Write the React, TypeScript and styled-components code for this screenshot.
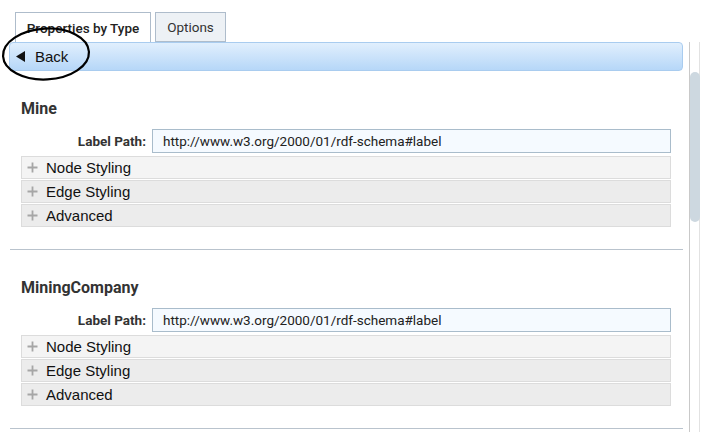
import * as React from 'react'
import styled, { createGlobalStyle } from 'styled-components'

const GlobalStyle = createGlobalStyle`
  html, body {
    margin: 0;
    padding: 0;
    background: #ffffff;
    font-family: Roboto, "Liberation Sans", Arial, sans-serif;
  }
`

// Outer page wrapper
const Page = styled.div`
  position: relative;
  width: 706px;
  height: 442px;
  padding: 12px 6px 0 8px;
  box-sizing: border-box;
  overflow: hidden;
`

const TabBar = styled.div`
  display: flex;
  gap: 4px;
  padding-left: 7px;
  height: 30px;
`

const Tab = styled.div<{ active?: boolean }>`
  display: flex;
  align-items: center;
  justify-content: center;
  box-sizing: border-box;
  height: 30px;
  width: ${props => props.active ? '136px' : '71px'};
  border: 1px solid #aebccb;
  border-bottom: ${props => props.active ? 'none' : '1px solid #aebccb'};
  background: ${props => props.active ? '#ffffff' : '#edf1f5'};
  font-size: 13.5px;
  font-weight: ${props => props.active ? 500 : 400};
  color: ${props => props.active ? '#222' : '#333'};
`

const Panel = styled.div`
  display: flex;
  height: 390px;
`

const Content = styled.div`
  width: 675px;
  overflow: hidden;
`

const BackBar = styled.div`
  display: flex;
  align-items: center;
  gap: 10px;
  height: 29px;
  margin-left: 1px;
  padding-left: 6px;
  box-sizing: border-box;
  border: 1px solid #a9ccef;
  border-radius: 4px;
  background: linear-gradient(#e1effd, #b6d7f8);
  font-family: "Liberation Sans", Arial, sans-serif;
  font-size: 15px;
  color: #111;
`

const Section = styled.div`
  margin-left: 2px;
  padding: 28px 12px 22px 11px;
  border-bottom: 1px solid #b9c3cd;
`

const Title = styled.div`
  font-size: 16px;
  font-weight: 700;
  color: #333;
  line-height: 20px;
  margin-bottom: 10px;
`

const LabelRow = styled.div`
  display: flex;
  align-items: center;
  gap: 6px;
  margin-bottom: 3px;
`

const Label = styled.div`
  width: 125px;
  text-align: right;
  font-size: 13.5px;
  font-weight: 700;
  color: #333;
`

const PathInput = styled.div`
  flex: 1;
  height: 24px;
  box-sizing: border-box;
  border: 1px solid #a9bccb;
  background: #f5faff;
  padding-left: 10px;
  display: flex;
  align-items: center;
  font-size: 13.5px;
  color: #222;
`

const AccordionList = styled.div`
  display: flex;
  flex-direction: column;
  gap: 1px;
`

const AccordionRow = styled.div<{ light?: boolean }>`
  display: flex;
  align-items: center;
  gap: 8px;
  height: 23px;
  box-sizing: border-box;
  padding-left: 5px;
  border: 1px solid #dcdcdc;
  background: ${props => props.light ? '#f4f4f4' : '#ececec'};
  font-family: "Liberation Sans", Arial, sans-serif;
  font-size: 15px;
  color: #111;
`

const Track = styled.div`
  position: relative;
  width: 11px;
  margin-left: 6px;
  box-sizing: border-box;
  border-left: 1px solid #c9c9c9;
  border-right: 1px solid #e2e2e2;
`

const Thumb = styled.div`
  position: absolute;
  left: 0;
  right: -1px;
  top: 30px;
  height: 150px;
  border-radius: 5px;
  background: #cdd8e0;
`

const Annotation = styled.svg`
  position: absolute;
  left: 1px;
  top: 26px;
  pointer-events: none;
`

const PlusIcon = () => (
  <svg width="11" height="11" viewBox="0 0 11 11">
    <path d="M5.5 0.5v10M0.5 5.5h10" stroke="#a6a6a6" strokeWidth="1.8" />
  </svg>
)

const BackArrow = () => (
  <svg width="9" height="11" viewBox="0 0 9 11">
    <polygon points="0,5.5 9,0 9,11" fill="#111" />
  </svg>
)

type TypeSectionProps = {
  name: string,
  path: string,
}

const TypeSection: React.FC<TypeSectionProps> = (props) => {
  return (
    <Section>
      <Title>{props.name}</Title>
      <LabelRow>
        <Label>Label Path:</Label>
        <PathInput>{props.path}</PathInput>
      </LabelRow>
      <AccordionList>
        <AccordionRow light><PlusIcon />Node Styling</AccordionRow>
        <AccordionRow><PlusIcon />Edge Styling</AccordionRow>
        <AccordionRow><PlusIcon />Advanced</AccordionRow>
      </AccordionList>
    </Section>
  )
}

const types = ['Mine', 'MiningCompany']

export default function App() {
  return (
    <Page>
      <GlobalStyle />
      <TabBar>
        <Tab active>Properties by Type</Tab>
        <Tab>Options</Tab>
      </TabBar>
      <Panel>
        <Content>
          <BackBar><BackArrow />Back</BackBar>
          {types.map(t => (
            <TypeSection key={t} name={t} path="http://www.w3.org/2000/01/rdf-schema#label" />
          ))}
        </Content>
        <Track><Thumb /></Track>
      </Panel>
      <Annotation width="92" height="56" viewBox="0 0 92 56">
        <ellipse cx="45" cy="28" rx="43" ry="25.5" fill="none" stroke="#000" strokeWidth="2.2" transform="rotate(-3 45 28)" />
      </Annotation>
    </Page>
  )
}
